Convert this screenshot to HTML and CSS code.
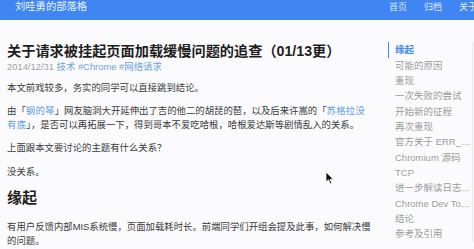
FILE: index.html
```html
<!DOCTYPE html>
<html lang="zh-CN">
<head>
<meta charset="utf-8">
<title>刘哇勇的部落格</title>
<link rel="stylesheet" href="styles.css">
</head>
<body>
<header class="topbar">
  <a class="brand" href="#">刘哇勇的部落格</a>
  <nav class="nav">
    <a href="#">首页</a>
    <a href="#">归档</a>
    <a href="#">关于</a>
    <a href="#">订阅</a>
  </nav>
</header>
<div class="page">
  <main class="post">
    <h1 class="post-title">关于请求被挂起页面加载缓慢问题的追查（01/13更）</h1>
    <div class="meta"><span class="date">2014/12/31</span> <a href="#">技术</a> <a href="#">#Chrome</a> <a href="#">#网络请求</a></div>
    <p>本文前戏较多，务实的同学可以直接跳到结论。</p>
    <p>由「<a href="#">钢的琴</a>」网友脑洞大开延伸出了吉的他二的胡琵的琶，以及后来许嵩的「<a href="#">苏格拉没有底</a>」，是否可以再拓展一下，得到哥本不爱吃哈根，哈根爱达斯等剧情乱入的关系。</p>
    <p>上面跟本文要讨论的主题有什么关系？</p>
    <p>没关系。</p>
    <h2 class="section">缘起</h2>
    <p>有用户反馈内部MIS系统慢，页面加载耗时长。前端同学们开组会提及此事，如何解决慢的问题。</p>
  </main>
  <aside class="toc">
    <ul>
      <li class="active">缘起</li>
      <li>可能的原因</li>
      <li>重现</li>
      <li>一次失败的尝试</li>
      <li>开始新的征程</li>
      <li>再次重现</li>
      <li>官方关于 ERR_CACHE_LOCK_TIMEOUT</li>
      <li>Chromium 源码</li>
      <li>TCP</li>
      <li>进一步解读日志...</li>
      <li>Chrome Dev Tools</li>
      <li>结论</li>
      <li>参考及引用</li>
    </ul>
  </aside>
</div>
<svg class="cursor" width="9" height="14" viewBox="0 0 9 14"><path d="M1 1 L1 11 L3.5 8.8 L5.4 13 L6.9 12.3 L5.1 8.3 L8.3 8.3 Z" fill="#111" stroke="#fff" stroke-width="0.8"/></svg>
</body>
</html>
```
FILE: styles.css
```css
* { box-sizing: border-box; }
html, body { margin: 0; padding: 0; }
body {
  background: #fbfbfd;
  font-family: "Liberation Sans", "Noto Sans CJK SC", sans-serif;
  color: #3a3a3a;
  width: 474px;
  height: 249px;
  overflow: hidden;
  position: relative;
}
a { text-decoration: none; color: #4a90e2; }
.topbar {
  height: 20px;
  background: #3f86f2;
  display: flex;
  align-items: flex-start;
  padding-left: 15px;
  white-space: nowrap;
  overflow: hidden;
}
.brand {
  color: #eef3fd;
  font-size: 10.3px;
  line-height: 14px;
}
.nav {
  margin-left: auto;
  display: flex;
  gap: 17px;
  margin-right: -38px;
}
.nav a {
  color: #dfe9fc;
  font-size: 9px;
  line-height: 14px;
}
.page {
  display: flex;
  align-items: flex-start;
}
.post {
  width: 374px;
  padding-left: 7px;
  flex: none;
}
.post-title {
  margin: 21.5px 0 0;
  font-size: 14.2px;
  line-height: 18px;
  font-weight: bold;
  color: #1e1e1e;
  white-space: nowrap;
}
.meta {
  font-size: 9.4px;
  line-height: 13.5px;
  color: #a0a0a0;
  margin-bottom: 7.75px;
}
.meta a { color: #6aa2e6; }
.post p {
  margin: 0 0 10px;
  font-size: 9.4px;
  line-height: 13.5px;
  color: #3a3a3a;
}
.post p a {
  color: #5b9be3;
  letter-spacing: 0.25px;
}
.section {
  margin: 0 0 12px;
  font-size: 15px;
  line-height: 20px;
  font-weight: bold;
  color: #1e1e1e;
}
.toc {
  margin-left: 14px;
  margin-top: 22.3px;
  width: 85px;
  flex: none;
  border-right: 1px solid #ececf0;
}
.toc ul {
  list-style: none;
  margin: 0;
  padding: 0;
}
.toc li {
  font-size: 9.5px;
  line-height: 15.33px;
  color: #9b9b9b;
  padding-left: 6px;
  border-left: 1.5px solid transparent;
  white-space: nowrap;
  overflow: hidden;
  text-overflow: ellipsis;
}
.toc li.active {
  color: #3f86f2;
  font-weight: bold;
  border-left-color: #3f86f2;
}
.cursor {
  position: absolute;
  left: 325px;
  top: 171px;
}
```
